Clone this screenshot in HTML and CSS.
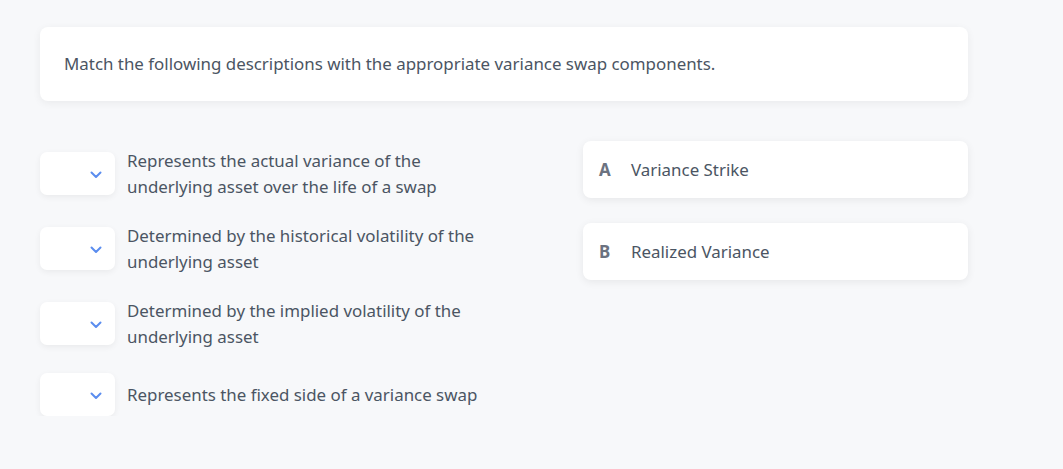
FILE: index.html
```html
<!DOCTYPE html>
<html>
<head>
<meta charset="utf-8">
<link rel="stylesheet" href="styles.css">
</head>
<body>
<div class="page">
  <div class="prompt">Match the following descriptions with the appropriate variance swap components.</div>
  <div class="match">
    <div class="left">
      <div class="row">
        <div class="select"><svg class="chev" width="12" height="8" viewBox="0 0 12 8"><path d="M1.5 1.5 L6 6 L10.5 1.5" fill="none" stroke="#5b8def" stroke-width="2" stroke-linecap="round" stroke-linejoin="round"/></svg></div>
        <div class="desc">Represents the actual variance of the<br>underlying asset over the life of a swap</div>
      </div>
      <div class="row">
        <div class="select"><svg class="chev" width="12" height="8" viewBox="0 0 12 8"><path d="M1.5 1.5 L6 6 L10.5 1.5" fill="none" stroke="#5b8def" stroke-width="2" stroke-linecap="round" stroke-linejoin="round"/></svg></div>
        <div class="desc">Determined by the historical volatility of the<br>underlying asset</div>
      </div>
      <div class="row">
        <div class="select"><svg class="chev" width="12" height="8" viewBox="0 0 12 8"><path d="M1.5 1.5 L6 6 L10.5 1.5" fill="none" stroke="#5b8def" stroke-width="2" stroke-linecap="round" stroke-linejoin="round"/></svg></div>
        <div class="desc">Determined by the implied volatility of the<br>underlying asset</div>
      </div>
      <div class="row">
        <div class="select"><svg class="chev" width="12" height="8" viewBox="0 0 12 8"><path d="M1.5 1.5 L6 6 L10.5 1.5" fill="none" stroke="#5b8def" stroke-width="2" stroke-linecap="round" stroke-linejoin="round"/></svg></div>
        <div class="desc">Represents the fixed side of a variance swap</div>
      </div>
    </div>
    <div class="right">
      <div class="card"><span class="letter">A</span><span class="opt">Variance Strike</span></div>
      <div class="card"><span class="letter">B</span><span class="opt">Realized Variance</span></div>
    </div>
  </div>
</div>
</body>
</html>
```
FILE: styles.css
```css
html, body {
  margin: 0;
  padding: 0;
  background: #f7f8fa;
}
body {
  font-family: "Noto Sans", "Open Sans", sans-serif;
  color: #4b5563;
  font-size: 16.9px;
}
.page {
  padding: 27px 0 0 40px;
  width: 928px;
}
.prompt {
  background: #fff;
  border-radius: 8px;
  box-shadow: 0 2px 8px rgba(0, 0, 0, 0.06);
  padding: 25px 24px;
  line-height: 24px;
}
.match {
  display: grid;
  grid-template-columns: 543px 385px;
  margin-top: 40px;
}
.left {
  display: flex;
  flex-direction: column;
  gap: 24px;
  padding-top: 7px;
}
.row {
  display: flex;
  align-items: center;
  gap: 12px;
}
.select {
  width: 75px;
  height: 43px;
  flex: none;
  background: #fff;
  border-radius: 7px;
  box-shadow: 0 2px 6px rgba(0, 0, 0, 0.06);
  display: flex;
  align-items: center;
  justify-content: flex-end;
  padding-right: 13px;
  box-sizing: border-box;
}
.chev {
  display: block;
  margin-top: 2px;
}
.desc {
  line-height: 25.5px;
}
.right {
  display: flex;
  flex-direction: column;
  gap: 25px;
}
.card {
  background: #fff;
  border-radius: 8px;
  box-shadow: 0 2px 8px rgba(0, 0, 0, 0.07);
  height: 57px;
  box-sizing: border-box;
  padding: 0 16px;
  display: flex;
  align-items: center;
}
.letter {
  font-weight: 700;
  color: #6b7280;
  width: 32px;
}
.opt {
  color: #4b5563;
}
```
